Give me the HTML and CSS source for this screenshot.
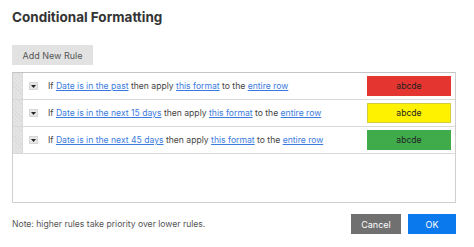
FILE: index.html
```html
<!DOCTYPE html>
<html lang="en">
<head>
    <meta charset="UTF-8">
    <title>Conditional Formatting</title>
    <link rel="stylesheet" href="styles.css">
</head>
<body>
    <div class="dialog">
        <h1>Conditional Formatting</h1>
        <button class="add-btn">Add New Rule</button>
        <div class="rules">
            <div class="rule">
                <div class="grip"></div>
                <span class="toggle"><svg width="5" height="3" viewBox="0 0 5 3"><path d="M0 0h5L2.5 3z" fill="#222"/></svg></span>
                <p class="rule-text">If <a>Date is in the past</a> then apply <a>this format</a> to the <a>entire row</a></p>
                <div class="swatch red">abcde</div>
            </div>
            <div class="rule">
                <div class="grip"></div>
                <span class="toggle"><svg width="5" height="3" viewBox="0 0 5 3"><path d="M0 0h5L2.5 3z" fill="#222"/></svg></span>
                <p class="rule-text">If <a>Date is in the next 15 days</a> then apply <a>this format</a> to the <a>entire row</a></p>
                <div class="swatch yellow">abcde</div>
            </div>
            <div class="rule">
                <div class="grip"></div>
                <span class="toggle"><svg width="5" height="3" viewBox="0 0 5 3"><path d="M0 0h5L2.5 3z" fill="#222"/></svg></span>
                <p class="rule-text">If <a>Date is in the next 45 days</a> then apply <a>this format</a> to the <a>entire row</a></p>
                <div class="swatch green">abcde</div>
            </div>
        </div>
        <div class="footer">
            <p class="note">Note: higher rules take priority over lower rules.</p>
            <button class="cancel-btn">Cancel</button>
            <button class="ok-btn">OK</button>
        </div>
    </div>
</body>
</html>
```

FILE: styles.css
```css
body {
    margin: 0;
    background-color: #fff;
    font-family: Inter, "Open Sans", sans-serif;
    color: #444;
}
.dialog {
    padding: 8px 18px 0 12px;
    display: flex;
    flex-direction: column;
    align-items: flex-start;
}
h1 {
    margin: 0;
    font-size: 13.5px;
    font-weight: 700;
    color: #333;
    line-height: 18px;
}
button {
    font-family: inherit;
    border: none;
    cursor: pointer;
    font-size: 9px;
}
.add-btn {
    margin-top: 19px;
    width: 81px;
    height: 20px;
    background-color: #e2e2e2;
    color: #555;
}
.rules {
    margin-top: 7px;
    align-self: stretch;
    height: 129px;
    border: 1px solid #cfcfcf;
    border-top-color: #c4c4c4;
}
.rule {
    display: flex;
    align-items: center;
    height: 26px;
    border-bottom: 1px solid #d9d9d9;
}
.grip {
    align-self: stretch;
    width: 9px;
    background-color: #e4e4e4;
    background-image: repeating-linear-gradient(45deg, #dcdcdc 0 1px, transparent 1px 3px);
    border-right: 1px solid #dadada;
}
.toggle {
    margin-left: 6px;
    width: 9px;
    height: 8px;
    background-color: #e6e6e6;
    border: 1px solid #d6d6d6;
    display: flex;
    align-items: center;
    justify-content: center;
    box-sizing: border-box;
}
.rule-text {
    margin: 0 0 0 10px;
    flex: 1;
    font-size: 8.6px;
    color: #444;
}
.rule-text a {
    color: #3b7be0;
    text-decoration: underline;
}
.swatch {
    width: 84px;
    height: 20px;
    margin-right: 4px;
    box-sizing: border-box;
    display: flex;
    align-items: center;
    justify-content: center;
    font-size: 8.6px;
    color: #222;
}
.red {
    background-color: #e53530;
}
.yellow {
    background-color: #fff200;
    border: 1px solid #d6cc40;
}
.green {
    background-color: #3fab4b;
}
.footer {
    align-self: stretch;
    display: flex;
    align-items: center;
    margin-top: 11px;
}
.note {
    margin: 0;
    flex: 1;
    font-size: 8.6px;
    color: #555;
}
.cancel-btn {
    width: 50px;
    height: 20px;
    background-color: #707070;
    color: #fff;
}
.ok-btn {
    margin-left: 7px;
    width: 48px;
    height: 20px;
    background-color: #0b79ee;
    color: #fff;
}
```
